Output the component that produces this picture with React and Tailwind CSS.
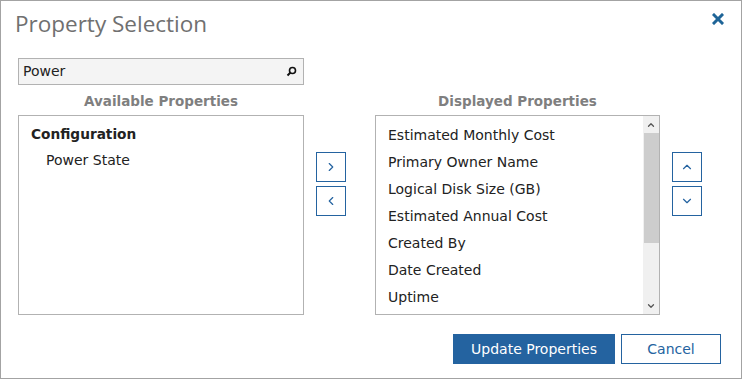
import { ChevronRight, ChevronLeft, ChevronUp, ChevronDown } from "lucide-react";

const displayed = [
  "Estimated Monthly Cost",
  "Primary Owner Name",
  "Logical Disk Size (GB)",
  "Estimated Annual Cost",
  "Created By",
  "Date Created",
  "Uptime",
];

function SmallButton({ children }) {
  return (
    <button className="w-[30px] h-[30px] border border-[#2463a0] bg-white flex items-center justify-center text-[#2463a0]">
      {children}
    </button>
  );
}

export default function App() {
  return (
    <div
      className="relative w-[742px] h-[379px] bg-white border border-[#a3a3a3] overflow-hidden text-[#222]"
      style={{ fontFamily: "'DejaVu Sans', Verdana, sans-serif" }}
    >
      {/* Header */}
      <div className="flex items-start justify-between pl-[14px] pr-[17px] pt-[8px] h-[57px]">
        <h1
          className="text-[22.5px] text-[#707070] leading-[30px]"
          style={{ fontFamily: "'Open Sans', sans-serif" }}
        >
          Property Selection
        </h1>
        <button className="mt-[4px] text-[#1e6497]">
          <svg width="12" height="12" viewBox="0 0 12 12">
            <path d="M2 2 L10 10 M10 2 L2 10" stroke="currentColor" strokeWidth="3" strokeLinecap="square" />
          </svg>
        </button>
      </div>

      <div className="flex pl-[17px]">
        {/* Left column */}
        <div className="w-[286px] flex flex-col">
          <div className="h-[27px] bg-[#f4f4f4] border border-[#b2b2b2] flex items-center justify-between pl-[4px] pr-[6px]">
            <span className="text-[14px]">Power</span>
            <svg width="11" height="11" viewBox="0 0 11 11">
              <circle cx="6.5" cy="4.5" r="3" fill="none" stroke="#111" strokeWidth="1.6" />
              <path d="M4.5 6.5 L1.5 9.5" stroke="#111" strokeWidth="2" />
            </svg>
          </div>
          <div className="h-[30px] pt-[3px] flex items-center justify-center font-bold text-[13.5px] text-[#7f7f7f]">
            Available Properties
          </div>
          <div className="h-[200px] border border-[#b2b2b2] pt-[10px] pl-[12px]">
            <div className="font-bold text-[13.7px] leading-[17px]">Configuration</div>
            <div className="text-[14px] pl-[15px] mt-[9px] leading-[17px]">Power State</div>
          </div>
        </div>

        {/* Move buttons */}
        <div className="w-[71px] pl-[12px] pt-[94px] flex flex-col gap-[4px]">
          <SmallButton>
            <ChevronRight size={14} strokeWidth={2} />
          </SmallButton>
          <SmallButton>
            <ChevronLeft size={14} strokeWidth={2} />
          </SmallButton>
        </div>

        {/* Right column */}
        <div className="w-[285px] flex flex-col">
          <div className="h-[27px]" />
          <div className="h-[30px] pt-[3px] flex items-center justify-center font-bold text-[13.5px] text-[#7f7f7f]">
            Displayed Properties
          </div>
          <div className="h-[200px] border border-[#b2b2b2] flex">
            <ul className="flex-1 pl-[12px] pt-[11px] flex flex-col gap-[10px]">
              {displayed.map((p) => (
                <li key={p} className="text-[14px] leading-[17px] whitespace-nowrap">
                  {p}
                </li>
              ))}
            </ul>
            <div className="w-[16px] bg-[#f0f0f0] flex flex-col items-center">
              <div className="h-[17px] flex items-center justify-center">
                <ChevronUp size={10} strokeWidth={3} className="text-[#555]" />
              </div>
              <div className="w-[15px] h-[110px] bg-[#cdcdcd]" />
              <div className="flex-1" />
              <div className="h-[17px] flex items-center justify-center">
                <ChevronDown size={10} strokeWidth={3} className="text-[#555]" />
              </div>
            </div>
          </div>
        </div>

        {/* Order buttons */}
        <div className="pl-[12px] pt-[94px] flex flex-col gap-[4px]">
          <SmallButton>
            <ChevronUp size={14} strokeWidth={2} />
          </SmallButton>
          <SmallButton>
            <ChevronDown size={14} strokeWidth={2} />
          </SmallButton>
        </div>
      </div>

      {/* Footer */}
      <div className="flex justify-end gap-[6px] pr-[20px] mt-[19px]">
        <button className="w-[162px] h-[30px] bg-[#2463a0] text-white text-[14px]">
          Update Properties
        </button>
        <button className="w-[100px] h-[30px] border border-[#2463a0] text-[#2463a0] bg-white text-[14px]">
          Cancel
        </button>
      </div>
    </div>
  );
}
